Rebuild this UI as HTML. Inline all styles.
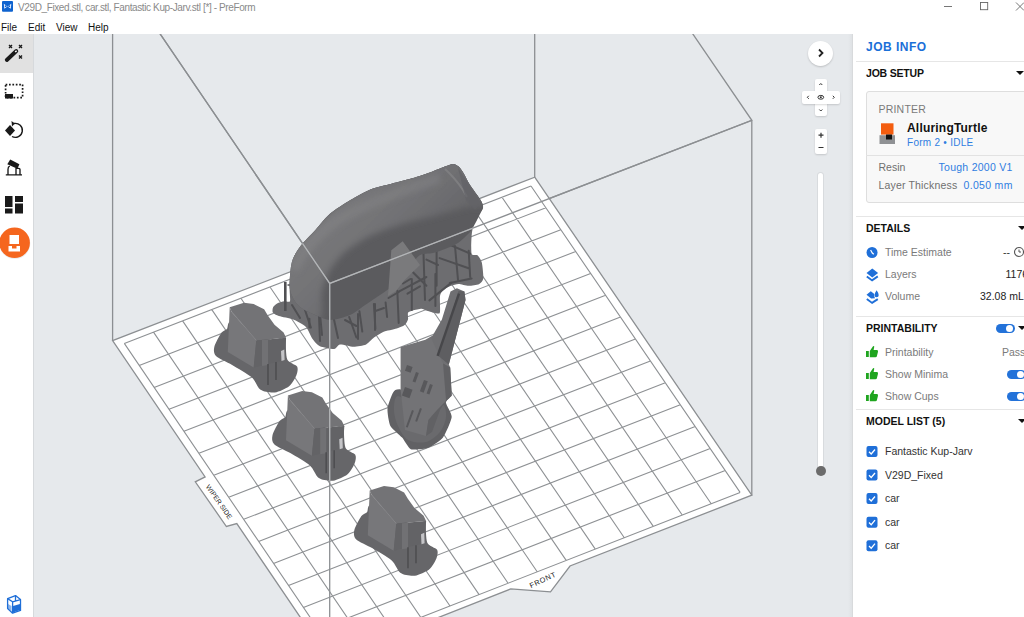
<!DOCTYPE html>
<html><head><meta charset="utf-8">
<style>
*{margin:0;padding:0;box-sizing:border-box}
html,body{width:1024px;height:617px;overflow:hidden;background:#fff;font-family:"Liberation Sans",sans-serif;position:relative}
.abs{position:absolute;white-space:nowrap}
#title{left:18px;top:1.7px;font-size:10px;color:#8a8a8a;line-height:12px;letter-spacing:-0.38px}
.menu{top:22.3px;font-size:10px;color:#111;line-height:12px}
#tb{left:0;top:34px;width:34px;height:583px;background:#fff;border-right:1px solid #d6d9dc}
#vp{left:34px;top:34px;width:818px;height:583px;background:#e6e9ec;overflow:hidden}
#panel{left:852px;top:34px;width:172px;height:583px;background:#fff;border-left:1px solid #d8dadc}
.hd{font-weight:bold;color:#111;font-size:10.5px;line-height:12px}
.lbl{color:#7a7a7a;font-size:10.5px;line-height:12px}
.sep{position:absolute;left:856px;width:168px;height:1px;background:#e6e6e6}
</style></head><body>
<svg class="abs" style="left:2.2px;top:1px" width="11" height="11" viewBox="0 0 11 11"><rect width="11" height="10.8" rx="1" fill="#0f63cf"/><path d="M1.8 2.8 L5.5 5.4 L9.3 2.8 L8.8 7.8 L5.5 5.6 L2.3 7.8Z" fill="#e8f0ff"/><circle cx="3.7" cy="5.2" r="0.9" fill="#0f63cf"/><circle cx="7.3" cy="5.2" r="0.9" fill="#0f63cf"/></svg>
<div id="title" class="abs">V29D_Fixed.stl, car.stl, Fantastic Kup-Jarv.stl [*] - PreForm</div>
<svg class="abs" style="left:940px;top:0" width="84" height="14"><path d="M4 6.5H12" stroke="#666" stroke-width="0.9"/><rect x="40.5" y="2.5" width="7.2" height="7.2" fill="none" stroke="#666" stroke-width="0.9"/><path d="M76 2.5L84 10.5M84 2.5L76 10.5" stroke="#666" stroke-width="0.9"/></svg>
<div class="abs menu" style="left:1px">File</div>
<div class="abs menu" style="left:28px">Edit</div>
<div class="abs menu" style="left:56px">View</div>
<div class="abs menu" style="left:88px">Help</div>

<div id="tb" class="abs">
  <div class="abs" style="left:0;top:0;width:33px;height:38.6px;background:#e1e1e1"></div>
</div>
<svg class="abs" style="left:0;top:34px" width="33" height="583" viewBox="0 34 33 583">
  <!-- wand -->
  <path d="M6.8 60 L16.3 51" stroke="#1a1a1a" stroke-width="3.9" stroke-linecap="round"/>
  <path d="M15.2 52 L16.6 50.7" stroke="#fff" stroke-width="1.5"/>
  <path d="M9 45 L12 48 M12 45 L9 48 M19 45 L22 48 M22 45 L19 48 M19 55.5 L22 58.5 M22 55.5 L19 58.5" stroke="#1a1a1a" stroke-width="1.35"/>
  <!-- selection -->
  <rect x="5.6" y="84.6" width="17" height="13" fill="none" stroke="#1a1a1a" stroke-width="1.7" stroke-dasharray="1.7 1.7"/>
  <rect x="5" y="94" width="8" height="4.5" fill="#1a1a1a"/>
  <!-- orient -->
  <path d="M10 125 L15 130.5 L10 136 L5 130.5Z" fill="#1a1a1a"/>
  <path d="M14 123.5 A7 7 0 1 1 12 136.5" fill="none" stroke="#1a1a1a" stroke-width="1.4"/>
  <path d="M11.5 121 L15 123.5 L12 126.5" fill="#1a1a1a"/>
  <!-- supports -->
  <path d="M10.2 159.6 L19.4 164.3 L17.4 168.8 L7.3 164.3Z" fill="#1a1a1a"/>
  <path d="M8 174.5 V169.2 Q8 166.8 9.8 166.2 M16 174.5 V168 M20 174.5 V169.4 Q20 168.3 18.8 168.3 H16.4 M5.8 174.8 H22" fill="none" stroke="#1a1a1a" stroke-width="1.35"/>
  <!-- layout -->
  <rect x="5" y="196" width="7.5" height="11" fill="#1a1a1a"/>
  <rect x="5" y="208.5" width="7.5" height="5" fill="#1a1a1a"/>
  <rect x="15" y="196" width="8" height="6" fill="#1a1a1a"/>
  <rect x="15" y="203.5" width="8" height="10" fill="#1a1a1a"/>
  <!-- print -->
  <circle cx="14.8" cy="243.5" r="15.5" fill="#c9ccd0" opacity=".35"/>
  <circle cx="14.6" cy="242.8" r="15.3" fill="#f5661e"/>
  <rect x="9.5" y="235" width="9.5" height="9" fill="#fff"/>
  <path d="M8.5 246 H12 V248.5 H16.5 V246 H20 V251.5 H8.5Z" fill="#fff"/>
  <!-- logo -->
  <g stroke="#1f6fd8" stroke-width="1.3" fill="none" stroke-linejoin="round">
   <path d="M7.6 598.6 L15.5 595.6 L20.5 599.6 L20.5 610.4 L12.6 613.2 L7.6 608.6Z"/>
   <path d="M7.6 598.6 L12.6 601.8 L20.5 599.6 M12.6 601.8 V613 M15.5 595.6 V600.6"/>
  </g>
  <path d="M13 606 L20 604 V610 L13 612.5Z" fill="#1f6fd8"/>
  <path d="M8 604 L11.5 606 V611 L8 608.5Z" fill="#1f6fd8" opacity="0.5"/>
</svg>

<div id="vp" class="abs">
<svg width="818" height="583" viewBox="34 34 818 583" style="position:absolute;left:0;top:0">
  <defs>
   <linearGradient id="gbody" x1="330" y1="200" x2="400" y2="270" gradientUnits="userSpaceOnUse">
    <stop offset="0" stop-color="#7a7a7c"/><stop offset="0.55" stop-color="#727275"/><stop offset="1" stop-color="#68686b"/>
   </linearGradient>
   <filter id="blur2" x="-20%" y="-20%" width="140%" height="140%"><feGaussianBlur stdDeviation="3"/></filter>
  </defs>
  <!-- box back lines -->
  <g stroke="#8c8f92" stroke-width="1.3" fill="none">
    <path d="M112.6 20 V340.6"/>
    <path d="M534.7 20 V177.2"/>
    <path d="M751.8 120.3 V495.2"/>
    <path d="M140.5 5 L329.7 283.4 L751.8 120.3 L693.1 34.4 L684 21"/>
  </g>
  <!-- plate -->
  <path id="plate" d="M534.7 177.2 L751.8 495.2 L570 566 L550.5 591.8 L510.7 588.9 L329.6 660.5 L236.8 523.6 L226.4 526.5 L195.3 481.8 L205.1 476.9 L112.6 340.6 Z" fill="#fff" stroke="#8c8f92" stroke-width="1.3"/>
  <path d="M531.0 186.0L124.3 343.4M531.0 186.0L740.1 492.4M545.9 207.8L139.2 365.4M502.0 197.2L711.2 503.7M560.8 229.7L154.1 387.4M473.1 208.4L682.2 515.0M575.7 251.5L169.0 409.3M444.1 219.6L653.3 526.4M590.6 273.4L183.9 431.3M415.2 230.8L624.3 537.7M605.6 295.2L198.9 453.3M386.2 242.1L595.3 549.1M620.5 317.1L213.8 475.3M357.1 253.3L566.2 560.4M635.4 339.0L228.7 497.3M328.1 264.5L537.2 571.8M650.4 360.9L243.7 519.3M299.0 275.8L508.1 583.2M665.3 382.8L258.6 541.4M270.0 287.0L479.1 594.6M680.3 404.7L273.5 563.4M240.9 298.3L450.0 606.0M695.2 426.6L288.5 585.4M211.8 309.6L420.8 617.4M710.2 448.5L303.4 607.5M182.6 320.9L391.7 628.8M725.2 470.4L318.4 629.5M153.5 332.1L362.6 640.2M740.1 492.4L333.4 651.6M124.3 343.4L333.4 651.6" stroke="#8e9194" stroke-width="1.1" fill="none"/>
  <text x="0" y="2.3" font-size="7.3" letter-spacing="0.7" fill="#222" transform="translate(543 580) rotate(-25)" text-anchor="middle" font-family="Liberation Sans">FRONT</text>
  <text x="0" y="0" font-size="6.8" fill="#222" transform="translate(217.1 503.2) rotate(55)" text-anchor="middle" font-family="Liberation Sans">WIPER SIDE</text>
  <path d="M289.6 285.7C290.0 280.6 292.3 262.1 293.8 257.3C295.3 252.5 300.1 247.5 302.7 244.3C305.3 241.1 312.5 233.3 315.7 229.7C318.9 226.1 325.9 217.3 330.0 213.8C334.1 210.3 345.7 203.0 350.5 200.1C355.3 197.2 366.2 191.1 371.0 189.2C375.8 187.3 386.8 185.0 391.6 183.7C396.4 182.4 407.3 179.7 412.1 178.3C416.9 176.9 428.8 172.8 432.6 171.4C436.4 170.0 442.5 167.5 444.9 166.6C447.3 165.7 451.5 163.9 453.1 163.9C454.7 163.9 457.3 165.4 458.6 166.6C459.9 167.8 462.7 171.8 464.0 174.0C465.3 176.2 468.0 182.0 470.0 185.1C472.0 188.2 479.3 197.9 480.8 200.4C482.3 202.9 483.1 205.5 483.1 206.9C483.1 208.3 481.7 211.0 480.8 212.1C479.9 213.2 476.7 213.4 475.6 216.0C474.6 218.6 472.3 229.6 471.8 234.0C471.3 238.4 470.9 251.2 471.6 253.7C472.3 256.2 476.3 254.2 477.5 255.2C478.7 256.2 481.1 259.8 481.8 262.5C482.5 265.2 483.6 276.0 483.3 278.5C483.0 281.0 480.6 283.4 478.9 284.3C477.2 285.2 471.1 285.8 468.7 285.8C466.3 285.8 460.5 284.0 458.5 284.0C456.5 284.0 452.9 285.1 451.2 285.8C449.4 286.5 444.8 288.4 443.5 289.6C442.2 290.8 440.4 293.3 440.0 296.0C439.6 298.7 440.5 310.8 439.8 312.7C439.1 314.6 435.7 313.0 434.1 312.7C432.5 312.4 427.7 310.9 426.2 310.4C424.7 309.9 423.2 308.7 421.6 308.7C420.0 308.7 414.2 309.9 412.6 310.4C411.0 310.9 408.5 311.6 408.0 312.7C407.5 313.8 408.4 318.1 408.0 319.5C407.6 320.9 405.9 324.1 404.6 325.1C403.3 326.2 399.2 327.7 396.7 328.5C394.2 329.3 385.7 330.9 383.1 332.0C380.5 333.1 376.0 336.2 374.0 337.6C372.0 339.0 368.5 343.3 366.1 344.4C363.7 345.5 356.6 346.7 353.6 346.7C350.6 346.7 342.3 344.2 340.0 344.5C337.7 344.8 336.5 348.8 334.2 349.0C331.9 349.2 322.4 347.4 319.9 346.3C317.4 345.2 314.5 341.5 312.8 339.2C311.1 336.9 308.0 329.0 305.7 326.7C303.4 324.4 296.3 320.7 293.2 319.5C290.1 318.3 281.3 316.8 278.9 316.0C276.5 315.2 273.5 313.4 272.8 312.4C272.1 311.3 272.7 308.0 273.2 307.0C273.7 306.0 275.8 304.2 277.1 303.5C278.4 302.8 282.8 301.6 284.3 301.3C285.8 301.0 289.4 302.8 290.0 301.0C290.6 299.2 289.2 290.8 289.6 285.7Z" fill="#6d6d70"/>
<path d="M423.5 253.7L425.0 300.0" stroke="#505053" stroke-width="2" fill="none" stroke-linecap="round"/>
<path d="M436.6 250.8L436.6 285.8" stroke="#505053" stroke-width="2" fill="none" stroke-linecap="round"/>
<path d="M446.9 243.5L470.2 253.7" stroke="#505053" stroke-width="2" fill="none" stroke-linecap="round"/>
<path d="M439.6 258.1L468.7 268.3" stroke="#505053" stroke-width="2" fill="none" stroke-linecap="round"/>
<path d="M468.7 250.8L470.2 277.0" stroke="#505053" stroke-width="2" fill="none" stroke-linecap="round"/>
<path d="M449.8 282.9L471.6 278.5" stroke="#505053" stroke-width="2" fill="none" stroke-linecap="round"/>
<path d="M429.4 300.4L451.2 282.9" stroke="#505053" stroke-width="2" fill="none" stroke-linecap="round"/>
<path d="M398.7 291.6L426.4 277.0" stroke="#505053" stroke-width="2" fill="none" stroke-linecap="round"/>
<path d="M411.9 271.2L426.4 285.8" stroke="#505053" stroke-width="2" fill="none" stroke-linecap="round"/>
<path d="M426.4 259.6L438.0 265.0" stroke="#505053" stroke-width="2" fill="none" stroke-linecap="round"/>
<path d="M455.0 246.0L458.0 280.0" stroke="#505053" stroke-width="2" fill="none" stroke-linecap="round"/>
<path d="M349.2 317.0L356.4 337.5" stroke="#505053" stroke-width="2" fill="none" stroke-linecap="round"/>
<path d="M345.0 320.0L356.4 326.0" stroke="#505053" stroke-width="2" fill="none" stroke-linecap="round"/>
<path d="M359.4 311.2L362.3 331.6" stroke="#505053" stroke-width="2" fill="none" stroke-linecap="round"/>
<path d="M373.9 303.9L375.4 328.7" stroke="#505053" stroke-width="2" fill="none" stroke-linecap="round"/>
<path d="M375.4 311.0L384.0 308.0" stroke="#505053" stroke-width="2" fill="none" stroke-linecap="round"/>
<path d="M385.6 302.5L387.1 317.0" stroke="#505053" stroke-width="2" fill="none" stroke-linecap="round"/>
<path d="M397.3 290.8L398.7 322.9" stroke="#505053" stroke-width="2" fill="none" stroke-linecap="round"/>
<path d="M388.5 298.0L398.7 292.0" stroke="#505053" stroke-width="2" fill="none" stroke-linecap="round"/>
<path d="M403.0 283.5L410.4 279.0" stroke="#505053" stroke-width="2" fill="none" stroke-linecap="round"/>
<path d="M407.5 293.7L420.0 286.4" stroke="#505053" stroke-width="2" fill="none" stroke-linecap="round"/>
<path d="M319.0 316.0L320.0 341.0" stroke="#505053" stroke-width="2" fill="none" stroke-linecap="round"/>
<path d="M358.0 314.0L358.0 339.0" stroke="#505053" stroke-width="2" fill="none" stroke-linecap="round"/>
<path d="M375.0 304.0L375.0 330.0" stroke="#505053" stroke-width="2" fill="none" stroke-linecap="round"/>
<path d="M411.8 279.0L411.8 310.0" stroke="#505053" stroke-width="2" fill="none" stroke-linecap="round"/>
<path d="M435.4 274.0L435.4 306.0" stroke="#505053" stroke-width="2" fill="none" stroke-linecap="round"/>
<path d="M305.0 310.0L310.9 327.6" stroke="#505053" stroke-width="2" fill="none" stroke-linecap="round"/>
<path d="M309.4 318.8L309.4 327.6" stroke="#505053" stroke-width="2" fill="none" stroke-linecap="round"/>
<path d="M320.0 314.0L322.0 335.0" stroke="#505053" stroke-width="2" fill="none" stroke-linecap="round"/>
<path d="M333.0 315.0L338.0 338.0" stroke="#505053" stroke-width="2" fill="none" stroke-linecap="round"/>
<path d="M292.0 305.0L300.0 318.0" stroke="#505053" stroke-width="2" fill="none" stroke-linecap="round"/>
<path d="M285.3 282 V311" stroke="#505053" stroke-width="2.6"/>
<path d="M287.5 285 L290 285" stroke="#505053" stroke-width="1.5"/>
<clipPath id="bodyclip"><path d="M289.6 285.7C289.5 280.9 290.4 267.2 291.9 261.9C293.4 256.6 297.5 250.1 300.7 245.8C303.9 241.5 311.8 234.0 315.7 229.7C319.6 225.4 325.4 217.7 330.0 213.8C334.6 209.9 345.0 203.4 350.5 200.1C356.0 196.8 365.5 191.4 371.0 189.2C376.5 187.0 386.1 185.2 391.6 183.7C397.1 182.2 406.6 179.9 412.1 178.3C417.6 176.7 428.2 173.0 432.6 171.4C437.0 169.8 442.2 167.6 444.9 166.6C447.6 165.6 451.3 163.9 453.1 163.9C454.9 163.9 457.1 165.3 458.6 166.6C460.1 167.9 462.5 171.5 464.0 174.0C465.5 176.5 467.8 181.6 470.0 185.1C472.2 188.6 479.1 197.5 480.8 200.4C482.5 203.3 483.1 205.4 483.1 206.9C483.1 208.4 481.9 210.0 481.0 212.0C480.1 214.0 477.5 219.3 476.0 222.0C474.5 224.7 472.4 229.2 470.0 232.0C467.6 234.8 461.3 240.7 458.0 243.0C454.7 245.3 448.3 247.7 445.0 249.0C441.7 250.3 436.5 252.1 433.0 253.0C429.5 253.9 422.4 252.9 418.6 256.0C414.8 259.1 408.4 271.7 404.6 276.0C400.8 280.3 393.7 285.2 390.0 288.0C386.3 290.8 380.5 294.6 377.0 297.0C373.5 299.4 367.3 303.6 363.7 306.0C360.1 308.4 354.5 313.1 350.0 315.0C345.5 316.9 334.9 320.1 330.0 320.0C325.1 319.9 317.0 315.7 313.0 314.0C309.0 312.3 302.7 309.1 300.0 307.0C297.3 304.9 294.4 300.8 293.0 298.0C291.6 295.2 289.7 290.5 289.6 285.7Z"/></clipPath>
<path d="M289.6 285.7C289.5 280.9 290.4 267.2 291.9 261.9C293.4 256.6 297.5 250.1 300.7 245.8C303.9 241.5 311.8 234.0 315.7 229.7C319.6 225.4 325.4 217.7 330.0 213.8C334.6 209.9 345.0 203.4 350.5 200.1C356.0 196.8 365.5 191.4 371.0 189.2C376.5 187.0 386.1 185.2 391.6 183.7C397.1 182.2 406.6 179.9 412.1 178.3C417.6 176.7 428.2 173.0 432.6 171.4C437.0 169.8 442.2 167.6 444.9 166.6C447.6 165.6 451.3 163.9 453.1 163.9C454.9 163.9 457.1 165.3 458.6 166.6C460.1 167.9 462.5 171.5 464.0 174.0C465.5 176.5 467.8 181.6 470.0 185.1C472.2 188.6 479.1 197.5 480.8 200.4C482.5 203.3 483.1 205.4 483.1 206.9C483.1 208.4 481.9 210.0 481.0 212.0C480.1 214.0 477.5 219.3 476.0 222.0C474.5 224.7 472.4 229.2 470.0 232.0C467.6 234.8 461.3 240.7 458.0 243.0C454.7 245.3 448.3 247.7 445.0 249.0C441.7 250.3 436.5 252.1 433.0 253.0C429.5 253.9 422.4 252.9 418.6 256.0C414.8 259.1 408.4 271.7 404.6 276.0C400.8 280.3 393.7 285.2 390.0 288.0C386.3 290.8 380.5 294.6 377.0 297.0C373.5 299.4 367.3 303.6 363.7 306.0C360.1 308.4 354.5 313.1 350.0 315.0C345.5 316.9 334.9 320.1 330.0 320.0C325.1 319.9 317.0 315.7 313.0 314.0C309.0 312.3 302.7 309.1 300.0 307.0C297.3 304.9 294.4 300.8 293.0 298.0C291.6 295.2 289.7 290.5 289.6 285.7Z" fill="#5b5b5e"/>
<g clip-path="url(#bodyclip)"><path d="M280.0 290.0C279.3 281.3 282.2 261.7 285.0 255.0C287.8 248.3 296.6 244.1 300.7 240.0C304.8 235.9 311.3 228.3 315.7 224.0C320.1 219.7 328.5 211.9 333.5 208.0C338.5 204.1 347.2 198.5 353.0 195.0C358.8 191.5 371.0 184.7 377.3 182.0C383.6 179.3 394.8 176.6 400.0 175.0C405.2 173.4 410.1 172.0 416.0 170.0C421.9 168.0 439.8 162.0 444.5 160.0C449.2 158.0 447.6 153.7 451.0 155.0C454.4 156.3 464.8 164.0 470.0 170.0C475.2 176.0 488.3 195.2 490.0 200.0C491.7 204.8 486.0 205.1 483.0 206.0C480.0 206.9 473.6 205.7 467.2 207.0C460.8 208.3 443.4 213.5 434.8 215.8C426.2 218.1 411.0 221.3 402.4 224.0C393.8 226.7 377.7 232.3 370.0 236.0C362.3 239.7 350.3 247.5 345.0 252.0C339.7 256.5 333.1 264.7 330.0 270.0C326.9 275.3 323.3 285.3 322.0 292.0C320.7 298.7 324.3 316.3 320.0 320.0C315.7 323.7 295.3 324.0 290.0 320.0C284.7 316.0 280.7 298.7 280.0 290.0Z" fill="url(#gbody)" filter="url(#blur2)"/>
<path d="M294 270 Q308 240 338 220 Q378 198 440 178" stroke="#8a8a8c" stroke-width="10" fill="none" opacity="0.4" filter="url(#blur2)"/></g>
<path d="M445 169 Q455 178 463 190 L467 197" stroke="#7e7e80" stroke-width="2" fill="none"/>
<path d="M458 168 L470 186 L481 203 L475 210 L466 200Z" fill="#636366" opacity="0.7"/>
<path d="M391.3 250.2L402.7 241.3L420.0 265.0L404.6 280.0L396.0 291.0L388.0 296.0Z" fill="#7a7a7c"/>
<path d="M230.0 322.0C232.6 321.9 241.0 325.6 246.3 328.0C251.6 330.4 264.7 338.7 270.0 340.0C275.3 341.3 283.9 338.0 286.0 338.0C288.1 338.0 285.4 337.0 285.6 339.9C285.8 342.8 285.8 355.9 287.3 359.5C288.8 363.1 295.9 364.5 297.1 366.6C298.3 368.7 297.4 373.0 296.3 375.6C295.2 378.2 292.0 384.0 289.1 386.3C286.2 388.6 278.7 392.0 274.9 392.5C271.1 393.0 263.7 391.8 260.6 389.8C257.5 387.8 255.5 380.6 251.7 377.3C247.9 374.0 236.9 367.7 232.1 364.9C227.3 362.1 218.4 358.4 216.0 356.0C213.6 353.6 213.6 350.1 214.3 347.0C215.0 343.9 219.7 335.2 221.4 332.8C223.1 330.4 225.9 330.4 227.0 329.0C228.1 327.6 227.4 322.1 230.0 322.0Z" fill="#666669"/>
<path d="M229.7 307.3L231.7 311.9L256.3 340.4L253.7 367.6L227.8 352.0Z" fill="#77777a"/>
<path d="M229.7 307.3L244.0 302.8L253.7 304.1L264.1 309.3L268.0 315.8L274.5 324.8L283.6 332.6L286.1 337.8L256.3 340.4L231.7 311.9Z" fill="#737376"/>
<path d="M256.3 340.4L286.1 337.8L284.9 359.9L253.7 367.6Z" fill="#636366"/>
<path d="M262.0 340.0L268.0 339.5L268.0 365.0L262.0 366.0Z" fill="#717174"/>
<path d="M232.0 312.0L256.3 340.4" stroke="#858588" stroke-width="1"/>
<path d="M281.0 351.0L284.3 349.5L284.6 360.0L281.5 361.0Z" fill="#c4c4c7"/>
<path d="M268.0 364.0L268.0 385.0" stroke="#4e4e51" stroke-width="1.6"/>
<path d="M276.0 362.0L276.0 380.0" stroke="#4e4e51" stroke-width="1.6"/>
<path d="M288.2 410.2C290.8 410.1 299.2 413.8 304.5 416.2C309.8 418.6 322.9 426.9 328.2 428.2C333.5 429.5 342.1 426.2 344.2 426.2C346.3 426.2 343.6 425.2 343.8 428.1C344.0 431.0 344.0 444.1 345.5 447.7C347.0 451.3 354.1 452.7 355.3 454.8C356.5 456.9 355.6 461.2 354.5 463.8C353.4 466.4 350.2 472.2 347.3 474.5C344.4 476.8 336.9 480.2 333.1 480.7C329.3 481.2 321.9 480.0 318.8 478.0C315.7 476.0 313.7 468.8 309.9 465.5C306.1 462.2 295.1 455.9 290.3 453.1C285.5 450.3 276.6 446.6 274.2 444.2C271.8 441.8 271.8 438.3 272.5 435.2C273.2 432.1 277.9 423.4 279.6 421.0C281.3 418.6 284.1 418.6 285.2 417.2C286.3 415.8 285.6 410.3 288.2 410.2Z" fill="#666669"/>
<path d="M287.9 395.5L289.9 400.1L314.5 428.6L311.9 455.8L286.0 440.2Z" fill="#77777a"/>
<path d="M287.9 395.5L302.2 391.0L311.9 392.3L322.3 397.5L326.2 404.0L332.7 413.0L341.8 420.8L344.3 426.0L314.5 428.6L289.9 400.1Z" fill="#737376"/>
<path d="M314.5 428.6L344.3 426.0L343.1 448.1L311.9 455.8Z" fill="#636366"/>
<path d="M320.2 428.2L326.2 427.7L326.2 453.2L320.2 454.2Z" fill="#717174"/>
<path d="M290.2 400.2L314.5 428.6" stroke="#858588" stroke-width="1"/>
<path d="M339.2 439.2L342.5 437.7L342.8 448.2L339.7 449.2Z" fill="#c4c4c7"/>
<path d="M326.2 452.2L326.2 473.2" stroke="#4e4e51" stroke-width="1.6"/>
<path d="M334.2 450.2L334.2 468.2" stroke="#4e4e51" stroke-width="1.6"/>
<path d="M370.0 505.2C372.6 505.1 381.0 508.8 386.3 511.2C391.6 513.6 404.7 521.9 410.0 523.2C415.3 524.5 423.9 521.2 426.0 521.2C428.1 521.2 425.4 520.2 425.6 523.1C425.8 526.0 425.8 539.1 427.3 542.7C428.8 546.3 435.9 547.7 437.1 549.8C438.3 551.9 437.4 556.2 436.3 558.8C435.2 561.4 432.0 567.2 429.1 569.5C426.2 571.8 418.7 575.2 414.9 575.7C411.1 576.2 403.7 575.0 400.6 573.0C397.5 571.0 395.5 563.8 391.7 560.5C387.9 557.2 376.9 550.9 372.1 548.1C367.3 545.3 358.4 541.6 356.0 539.2C353.6 536.8 353.6 533.3 354.3 530.2C355.0 527.1 359.7 518.4 361.4 516.0C363.1 513.6 365.9 513.6 367.0 512.2C368.1 510.8 367.4 505.3 370.0 505.2Z" fill="#666669"/>
<path d="M369.7 490.5L371.7 495.1L396.3 523.6L393.7 550.8L367.8 535.2Z" fill="#77777a"/>
<path d="M369.7 490.5L384.0 486.0L393.7 487.3L404.1 492.5L408.0 499.0L414.5 508.0L423.6 515.8L426.1 521.0L396.3 523.6L371.7 495.1Z" fill="#737376"/>
<path d="M396.3 523.6L426.1 521.0L424.9 543.1L393.7 550.8Z" fill="#636366"/>
<path d="M402.0 523.2L408.0 522.7L408.0 548.2L402.0 549.2Z" fill="#717174"/>
<path d="M372.0 495.2L396.3 523.6" stroke="#858588" stroke-width="1"/>
<path d="M421.0 534.2L424.3 532.7L424.6 543.2L421.5 544.2Z" fill="#c4c4c7"/>
<path d="M408.0 547.2L408.0 568.2" stroke="#4e4e51" stroke-width="1.6"/>
<path d="M416.0 545.2L416.0 563.2" stroke="#4e4e51" stroke-width="1.6"/>
<path d="M400.6 389.4C395.9 389.1 394.6 390.4 393.3 392.3C392.0 394.2 387.8 405.0 387.5 408.4C387.2 411.8 388.9 423.0 390.4 425.9C391.9 428.8 400.1 435.3 402.1 437.6C404.2 439.9 408.3 448.2 410.9 449.2C413.5 450.2 425.2 449.0 428.4 447.8C431.6 446.6 440.7 440.7 443.0 437.6C445.3 434.5 451.4 420.6 451.7 417.1C452.0 413.6 445.9 404.8 445.9 402.6C445.9 400.4 452.3 396.1 451.7 395.3C451.1 394.5 445.1 395.6 440.0 395.0C434.9 394.4 405.3 389.7 400.6 389.4Z" fill="#616164"/>
<path d="M398.0 396.0C394.1 396.0 394.0 405.5 394.0 410.0C394.0 414.5 395.9 421.5 398.0 426.0C400.1 430.5 403.8 437.6 408.0 440.0C412.2 442.4 421.2 443.2 426.0 442.0C430.8 440.8 437.0 435.8 440.0 432.0C443.0 428.2 445.7 421.2 446.0 417.0C446.3 412.8 445.9 405.1 442.0 404.0C438.1 402.9 426.6 411.2 420.0 410.0C413.4 408.8 401.9 396.0 398.0 396.0Z" fill="#6a6a6d"/>
<path d="M400.6 347.1L425.4 339.8L432.7 335.4L441.0 352.0L448.8 364.6L450.2 367.5L451.7 395.3L437.1 409.9L428.4 420.0L426.0 436.0L405.0 430.0L400.6 389.4Z" fill="#737376"/>
<path d="M443.0 363.2L450.2 367.5L451.7 395.3L437.1 409.9L428.4 420.0L426.0 436.0L432.0 432.0L440.0 410.0L446.0 400.0Z" fill="#616164"/>
<path d="M450.5 291.5L456.9 288.3L464.4 291.5L465.5 300.1L448.8 364.6L443.0 363.2L431.3 338.4L433.3 334.4L441.9 319.4Z" fill="#6f6f72"/>
<path d="M458.5 291.0L464.4 291.5L465.5 300.1L448.8 364.6L438.5 356.0Z" fill="#5e5e61"/>
<path d="M459 293.6 L437.6 355.9" stroke="#47474a" stroke-width="2.4"/>
<rect x="407" y="365" width="6" height="6" fill="#58585b" transform="rotate(20 407 365)"/>
<rect x="416" y="372" width="3" height="10" fill="#58585b" transform="rotate(20 416 372)"/>
<rect x="405" y="387" width="8" height="9" fill="#58585b" transform="rotate(20 405 387)"/>
<rect x="424" y="380" width="4" height="12" fill="#58585b" transform="rotate(20 424 380)"/>
<rect x="430" y="384" width="3" height="10" fill="#58585b" transform="rotate(20 430 384)"/>
<rect x="412" y="410" width="2" height="18" fill="#58585b" transform="rotate(20 412 410)"/>
<rect x="420" y="408" width="2" height="14" fill="#58585b" transform="rotate(20 420 408)"/>
<clipPath id="modelclip"><path d="M289.6 285.7C290.0 280.6 292.3 262.1 293.8 257.3C295.3 252.5 300.1 247.5 302.7 244.3C305.3 241.1 312.5 233.3 315.7 229.7C318.9 226.1 325.9 217.3 330.0 213.8C334.1 210.3 345.7 203.0 350.5 200.1C355.3 197.2 366.2 191.1 371.0 189.2C375.8 187.3 386.8 185.0 391.6 183.7C396.4 182.4 407.3 179.7 412.1 178.3C416.9 176.9 428.8 172.8 432.6 171.4C436.4 170.0 442.5 167.5 444.9 166.6C447.3 165.7 451.5 163.9 453.1 163.9C454.7 163.9 457.3 165.4 458.6 166.6C459.9 167.8 462.7 171.8 464.0 174.0C465.3 176.2 468.0 182.0 470.0 185.1C472.0 188.2 479.3 197.9 480.8 200.4C482.3 202.9 483.1 205.5 483.1 206.9C483.1 208.3 481.7 211.0 480.8 212.1C479.9 213.2 476.7 213.4 475.6 216.0C474.6 218.6 472.3 229.6 471.8 234.0C471.3 238.4 470.9 251.2 471.6 253.7C472.3 256.2 476.3 254.2 477.5 255.2C478.7 256.2 481.1 259.8 481.8 262.5C482.5 265.2 483.6 276.0 483.3 278.5C483.0 281.0 480.6 283.4 478.9 284.3C477.2 285.2 471.1 285.8 468.7 285.8C466.3 285.8 460.5 284.0 458.5 284.0C456.5 284.0 452.9 285.1 451.2 285.8C449.4 286.5 444.8 288.4 443.5 289.6C442.2 290.8 440.4 293.3 440.0 296.0C439.6 298.7 440.5 310.8 439.8 312.7C439.1 314.6 435.7 313.0 434.1 312.7C432.5 312.4 427.7 310.9 426.2 310.4C424.7 309.9 423.2 308.7 421.6 308.7C420.0 308.7 414.2 309.9 412.6 310.4C411.0 310.9 408.5 311.6 408.0 312.7C407.5 313.8 408.4 318.1 408.0 319.5C407.6 320.9 405.9 324.1 404.6 325.1C403.3 326.2 399.2 327.7 396.7 328.5C394.2 329.3 385.7 330.9 383.1 332.0C380.5 333.1 376.0 336.2 374.0 337.6C372.0 339.0 368.5 343.3 366.1 344.4C363.7 345.5 356.6 346.7 353.6 346.7C350.6 346.7 342.3 344.2 340.0 344.5C337.7 344.8 336.5 348.8 334.2 349.0C331.9 349.2 322.4 347.4 319.9 346.3C317.4 345.2 314.5 341.5 312.8 339.2C311.1 336.9 308.0 329.0 305.7 326.7C303.4 324.4 296.3 320.7 293.2 319.5C290.1 318.3 281.3 316.8 278.9 316.0C276.5 315.2 273.5 313.4 272.8 312.4C272.1 311.3 272.7 308.0 273.2 307.0C273.7 306.0 275.8 304.2 277.1 303.5C278.4 302.8 282.8 301.6 284.3 301.3C285.8 301.0 289.4 302.8 290.0 301.0C290.6 299.2 289.2 290.8 289.6 285.7Z"/><path d="M289.6 285.7C289.5 280.9 290.4 267.2 291.9 261.9C293.4 256.6 297.5 250.1 300.7 245.8C303.9 241.5 311.8 234.0 315.7 229.7C319.6 225.4 325.4 217.7 330.0 213.8C334.6 209.9 345.0 203.4 350.5 200.1C356.0 196.8 365.5 191.4 371.0 189.2C376.5 187.0 386.1 185.2 391.6 183.7C397.1 182.2 406.6 179.9 412.1 178.3C417.6 176.7 428.2 173.0 432.6 171.4C437.0 169.8 442.2 167.6 444.9 166.6C447.6 165.6 451.3 163.9 453.1 163.9C454.9 163.9 457.1 165.3 458.6 166.6C460.1 167.9 462.5 171.5 464.0 174.0C465.5 176.5 467.8 181.6 470.0 185.1C472.2 188.6 479.1 197.5 480.8 200.4C482.5 203.3 483.1 205.4 483.1 206.9C483.1 208.4 481.9 210.0 481.0 212.0C480.1 214.0 477.5 219.3 476.0 222.0C474.5 224.7 472.4 229.2 470.0 232.0C467.6 234.8 461.3 240.7 458.0 243.0C454.7 245.3 448.3 247.7 445.0 249.0C441.7 250.3 436.5 252.1 433.0 253.0C429.5 253.9 422.4 252.9 418.6 256.0C414.8 259.1 408.4 271.7 404.6 276.0C400.8 280.3 393.7 285.2 390.0 288.0C386.3 290.8 380.5 294.6 377.0 297.0C373.5 299.4 367.3 303.6 363.7 306.0C360.1 308.4 354.5 313.1 350.0 315.0C345.5 316.9 334.9 320.1 330.0 320.0C325.1 319.9 317.0 315.7 313.0 314.0C309.0 312.3 302.7 309.1 300.0 307.0C297.3 304.9 294.4 300.8 293.0 298.0C291.6 295.2 289.7 290.5 289.6 285.7Z"/><path d="M288.2 410.2C290.8 410.1 299.2 413.8 304.5 416.2C309.8 418.6 322.9 426.9 328.2 428.2C333.5 429.5 342.1 426.2 344.2 426.2C346.3 426.2 343.6 425.2 343.8 428.1C344.0 431.0 344.0 444.1 345.5 447.7C347.0 451.3 354.1 452.7 355.3 454.8C356.5 456.9 355.6 461.2 354.5 463.8C353.4 466.4 350.2 472.2 347.3 474.5C344.4 476.8 336.9 480.2 333.1 480.7C329.3 481.2 321.9 480.0 318.8 478.0C315.7 476.0 313.7 468.8 309.9 465.5C306.1 462.2 295.1 455.9 290.3 453.1C285.5 450.3 276.6 446.6 274.2 444.2C271.8 441.8 271.8 438.3 272.5 435.2C273.2 432.1 277.9 423.4 279.6 421.0C281.3 418.6 284.1 418.6 285.2 417.2C286.3 415.8 285.6 410.3 288.2 410.2Z"/><path d="M287.9 395.5L289.9 400.1L314.5 428.6L311.9 455.8L286.0 440.2Z"/><path d="M287.9 395.5L302.2 391.0L311.9 392.3L322.3 397.5L326.2 404.0L332.7 413.0L341.8 420.8L344.3 426.0L314.5 428.6L289.9 400.1Z"/><path d="M314.5 428.6L344.3 426.0L343.1 448.1L311.9 455.8Z"/></clipPath>
  <!-- front vertical + top lines -->
  <g stroke="#8c8f92" stroke-width="1.3" fill="none">
    <path d="M329.7 283.4 V620"/>
    <path d="M140.5 5 L329.7 283.4 L751.8 120.3"/>
  </g>
  <g stroke="#b4b6b8" stroke-width="1.2" fill="none" clip-path="url(#modelclip)">
    <path d="M329.7 283.4 V620"/>
    <path d="M140.5 5 L329.7 283.4 L751.8 120.3"/>
  </g>
</svg>
<!-- nav controls -->
<div class="abs" style="left:774.3px;top:6.6px;width:25.2px;height:25.2px;border-radius:50%;background:#fff;box-shadow:0 1px 2px rgba(0,0,0,.18)"></div>
<svg class="abs" style="left:774px;top:6px" width="26" height="26"><path d="M11 9.5 L14.5 13 L11 16.5" stroke="#222" stroke-width="1.8" fill="none"/></svg>
<div class="abs" style="left:780.7px;top:44.6px;width:12.3px;height:37.4px;border-radius:2px;background:#fff;box-shadow:0 1px 2px rgba(0,0,0,.15)"></div>
<div class="abs" style="left:768.1px;top:56.7px;width:37.5px;height:13.2px;border-radius:2px;background:#fff;box-shadow:0 1px 2px rgba(0,0,0,.15)"></div>
<div class="abs" style="left:780.7px;top:56px;width:12.3px;height:14px;background:#fff"></div>
<svg class="abs" style="left:768px;top:44px" width="38" height="38" viewBox="0 0 38 38">
 <g stroke="#333" stroke-width="1" fill="none">
  <path d="M17.3 7 L18.8 5.5 L20.3 7"/>
  <path d="M17.3 31.5 L18.8 33 L20.3 31.5"/>
  <path d="M6.8 17.8 L5.3 19.3 L6.8 20.8"/>
  <path d="M30.8 17.8 L32.3 19.3 L30.8 20.8"/>
  <ellipse cx="18.8" cy="19.3" rx="2.9" ry="1.9"/>
 </g>
 <circle cx="18.8" cy="19.3" r="1" fill="#333"/>
</svg>
<div class="abs" style="left:780.7px;top:94.6px;width:12.3px;height:25.5px;border-radius:2px;background:#fff;box-shadow:0 1px 2px rgba(0,0,0,.15)"></div>
<svg class="abs" style="left:780px;top:94px" width="14" height="27"><path d="M4.5 7.2 H9.5 M7 4.7 V9.7 M4.5 19.5 H9.5" stroke="#333" stroke-width="1.2"/></svg>
<div class="abs" style="left:784.1px;top:139.3px;width:4.9px;height:300px;border-radius:2.5px;background:#fff;box-shadow:0 0 0 1px #d8dbde"></div>
<div class="abs" style="left:782px;top:432.3px;width:9.8px;height:9.8px;border-radius:50%;background:#6b6b6b"></div>
</div>

<div class="abs" style="left:848px;top:34px;width:4px;height:583px;background:linear-gradient(90deg,#e6e9ec,#dfe2e5)"></div>
<div id="panel" class="abs"></div>
<div class="abs" style="left:866px;top:40px;font-size:12px;font-weight:bold;color:#1a6fd8;line-height:14px;letter-spacing:0.5px">JOB INFO</div>
<div class="sep" style="top:61px"></div>
<div class="abs hd" style="left:866px;top:67px;letter-spacing:-0.2px">JOB SETUP</div>
<svg class="abs" style="left:1016px;top:71px" width="8" height="5"><path d="M0 0H8L4 4Z" fill="#111"/></svg>
<div class="abs" style="left:866.4px;top:91.4px;width:170px;height:111.3px;background:#f8f8f8;border:1px solid #dedede;border-radius:3px"></div>
<div class="abs" style="left:866.4px;top:154.5px;width:170px;height:1px;background:#e2e2e2"></div>
<div class="abs lbl" style="left:878.5px;top:103px;letter-spacing:0.2px;color:#7a7a7a">PRINTER</div>
<svg class="abs" style="left:879px;top:123px" width="17" height="22"><rect x="2" y="0.3" width="12.5" height="11.3" fill="#f35d10"/><rect x="0.5" y="12.2" width="15.5" height="8.8" fill="#8f9194"/><rect x="7" y="11.5" width="6" height="5" fill="#111"/></svg>
<div class="abs" style="left:907px;top:120.5px;font-size:12px;font-weight:bold;color:#111;line-height:14px;letter-spacing:0.2px">AlluringTurtle</div>
<div class="abs" style="left:907px;top:137px;font-size:10px;color:#2f7de1;line-height:12px;letter-spacing:0.27px">Form 2 • IDLE</div>
<div class="abs lbl" style="left:878.5px;top:161px;color:#6f6f6f">Resin</div>
<div class="abs" style="left:938.5px;top:161px;font-size:10.5px;color:#2f7de1;line-height:12px;letter-spacing:0.27px">Tough 2000 V1</div>
<div class="abs lbl" style="left:878.5px;top:178.5px;color:#6f6f6f;letter-spacing:0.17px">Layer Thickness</div>
<div class="abs" style="left:963.6px;top:178.5px;font-size:10.5px;color:#2f7de1;line-height:12px;letter-spacing:0.3px">0.050 mm</div>
<div class="sep" style="top:216px"></div>
<div class="abs hd" style="left:866px;top:222px">DETAILS</div>
<svg class="abs" style="left:1018px;top:226px" width="8" height="5"><path d="M0 0H8L4 4Z" fill="#111"/></svg>
<svg class="abs" style="left:866px;top:246px" width="14" height="60">
 <circle cx="6.05" cy="6.5" r="5.5" fill="#1f6fd8"/><path d="M4.6 4 L6.3 7 L7.8 8.3" stroke="#fff" stroke-width="1.2" fill="none"/>
 <path d="M0.5 27.1 L6.3 22.6 L12.1 27.1 L6.3 31.6Z" fill="#1f6fd8"/><path d="M0.8 30.4 L6.1 34.4 L11.8 30.4" stroke="#1f6fd8" stroke-width="1.9" fill="none"/>
 <path d="M0.5 48.8 L4.8 45.2 L8.3 48 Q7.6 50.6 9 52.2 L5.2 52.4Z" fill="#1f6fd8"/><path d="M10.6 44.2 Q12.8 47.2 12.7 49.2 A2.1 2.1 0 0 1 8.5 49.2 Q8.5 47.2 10.6 44.2Z" fill="#1f6fd8"/><path d="M0.8 53.1 L6.1 56.9 L11.8 53.1" stroke="#1f6fd8" stroke-width="1.9" fill="none"/>
</svg>
<div class="abs lbl" style="left:885px;top:245.5px">Time Estimate</div>
<div class="abs" style="left:1003px;top:245.5px;font-size:10.5px;color:#333;line-height:12px">--</div>
<svg class="abs" style="left:1013px;top:246px" width="11" height="12"><circle cx="6" cy="6" r="4.5" stroke="#555" stroke-width="1.1" fill="none"/><path d="M6 3.5V6H8" stroke="#555" fill="none"/></svg>
<div class="abs lbl" style="left:885px;top:268px">Layers</div>
<div class="abs" style="left:1005.5px;top:268px;font-size:10.5px;color:#222;line-height:12px">1176</div>
<div class="abs lbl" style="left:885px;top:290px">Volume</div>
<div class="abs" style="left:980px;top:290px;font-size:10.5px;color:#222;line-height:12px">32.08 mL</div>
<div class="sep" style="top:315.5px"></div>
<div class="abs hd" style="left:866px;top:322px">PRINTABILITY</div>
<div class="abs" style="left:995.8px;top:323.5px;width:19px;height:9.3px;border-radius:5px;background:#2372d9"></div>
<div class="abs" style="left:1006px;top:324.6px;width:7.2px;height:7.2px;border-radius:50%;background:#fff"></div>
<svg class="abs" style="left:1018px;top:326px" width="8" height="5"><path d="M0 0H8L4 4Z" fill="#111"/></svg>
<svg class="abs" style="left:865px;top:345px" width="15" height="60">
 <g fill="#1fa51f">
 <rect x="1" y="6" width="2.8" height="6"/><path d="M4.8 6 L7.5 2 Q8.5 0.5 9.3 1.5 L8.6 5 H12 Q13.3 5.3 13 6.8 L11.8 11.5 Q11.5 12.3 10.5 12.3 H4.8Z"/>
 <rect x="1" y="28" width="2.8" height="6"/><path d="M4.8 28 L7.5 24 Q8.5 22.5 9.3 23.5 L8.6 27 H12 Q13.3 27.3 13 28.8 L11.8 33.5 Q11.5 34.3 10.5 34.3 H4.8Z"/>
 <rect x="1" y="50" width="2.8" height="6"/><path d="M4.8 50 L7.5 46 Q8.5 44.5 9.3 45.5 L8.6 49 H12 Q13.3 49.3 13 50.8 L11.8 55.5 Q11.5 56.3 10.5 56.3 H4.8Z"/>
 </g>
</svg>
<div class="abs lbl" style="left:885px;top:346px">Printability</div>
<div class="abs lbl" style="left:1002px;top:346px">Pass</div>
<div class="abs lbl" style="left:885px;top:368px">Show Minima</div>
<div class="abs" style="left:1007px;top:370px;width:19px;height:9.3px;border-radius:5px;background:#2372d9"></div>
<div class="abs" style="left:1017px;top:371px;width:7.2px;height:7.2px;border-radius:50%;background:#fff"></div>
<div class="abs lbl" style="left:885px;top:390px">Show Cups</div>
<div class="abs" style="left:1007px;top:392px;width:19px;height:9.3px;border-radius:5px;background:#2372d9"></div>
<div class="abs" style="left:1017px;top:393px;width:7.2px;height:7.2px;border-radius:50%;background:#fff"></div>
<div class="sep" style="top:409px"></div>
<div class="abs hd" style="left:866px;top:415px">MODEL LIST (5)</div>
<svg class="abs" style="left:1018px;top:419px" width="8" height="5"><path d="M0 0H8L4 4Z" fill="#111"/></svg>
<svg class="abs" style="left:866px;top:445px" width="12" height="110">
 <g fill="#1f6fd8"><rect x="0.5" y="1" width="11" height="11" rx="2"/><rect x="0.5" y="24.5" width="11" height="11" rx="2"/><rect x="0.5" y="48" width="11" height="11" rx="2"/><rect x="0.5" y="71.7" width="11" height="11" rx="2"/><rect x="0.5" y="95.2" width="11" height="11" rx="2"/></g>
 <g stroke="#fff" stroke-width="1.3" fill="none"><path d="M3 6.8 L5.2 9 L9 4.5"/><path d="M3 30.3 L5.2 32.5 L9 28"/><path d="M3 53.8 L5.2 56 L9 51.5"/><path d="M3 77.5 L5.2 79.7 L9 75.2"/><path d="M3 101 L5.2 103.2 L9 98.7"/></g>
</svg>
<div class="abs" style="left:885px;top:445px;font-size:10.5px;color:#333;line-height:12px">Fantastic Kup-Jarv</div>
<div class="abs" style="left:885px;top:468.5px;font-size:10.5px;color:#333;line-height:12px">V29D_Fixed</div>
<div class="abs" style="left:885px;top:492px;font-size:10.5px;color:#333;line-height:12px">car</div>
<div class="abs" style="left:885px;top:515.7px;font-size:10.5px;color:#333;line-height:12px">car</div>
<div class="abs" style="left:885px;top:539.2px;font-size:10.5px;color:#333;line-height:12px">car</div>
</body></html>
